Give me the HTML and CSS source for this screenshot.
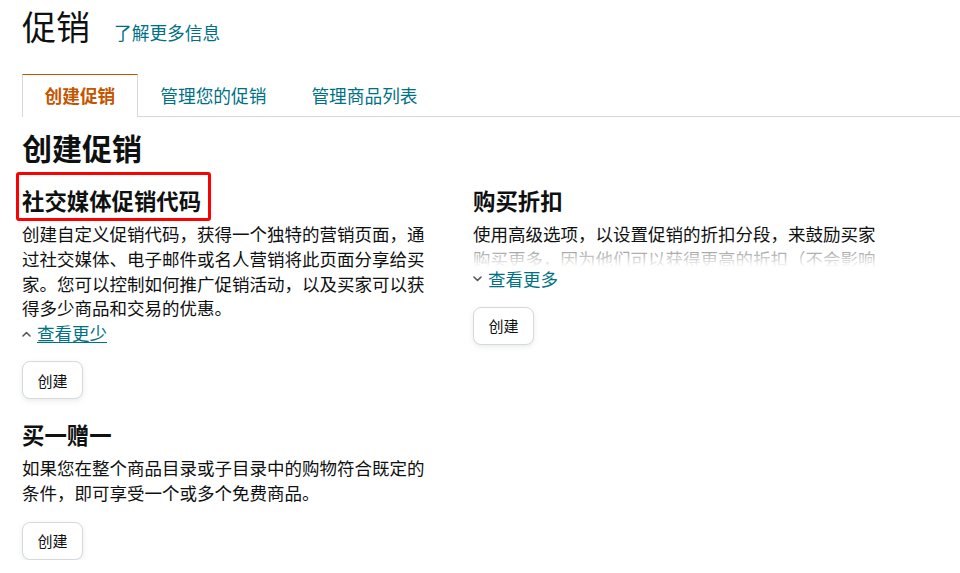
FILE: index.html
```html
<!DOCTYPE html>
<html lang="zh-CN">
<head>
<meta charset="utf-8">
<title>促销</title>
<link rel="stylesheet" href="styles.css">
</head>
<body>
<div class="page">
  <header class="header">
    <h1 class="title">促销</h1>
    <a class="learn" href="#">了解更多信息</a>
  </header>

  <nav class="tabs">
    <a class="tab active" href="#">创建促销</a>
    <a class="tab" href="#">管理您的促销</a>
    <a class="tab" href="#">管理商品列表</a>
  </nav>

  <h2 class="section-title">创建促销</h2>

  <div class="grid">
    <section class="promo promo-social">
      <h3 class="promo-title"><span class="marked">社交媒体促销代码</span></h3>
      <p class="promo-desc">创建自定义促销代码，获得一个独特的营销页面，通过社交媒体、电子邮件或名人营销将此页面分享给买家。您可以控制如何推广促销活动，以及买家可以获得多少商品和交易的优惠。</p>
      <a class="toggle underline" href="#">
        <svg class="chev" width="9" height="6" viewBox="0 0 9 6"><path d="M1 5 L4.5 1.5 L8 5" fill="none" stroke="#565959" stroke-width="1.6" stroke-linecap="round" stroke-linejoin="round"/></svg>
        <span>查看更少</span>
      </a>
      <button class="btn" type="button">创建</button>
    </section>

    <section class="promo promo-discount">
      <h3 class="promo-title">购买折扣</h3>
      <div class="collapsed">
        <p class="promo-desc">使用高级选项，以设置促销的折扣分段，来鼓励买家购买更多，因为他们可以获得更高的折扣（不会影响您的利润）。</p>
      </div>
      <a class="toggle" href="#">
        <svg class="chev" width="9" height="6" viewBox="0 0 9 6"><path d="M1 1 L4.5 4.5 L8 1" fill="none" stroke="#565959" stroke-width="1.6" stroke-linecap="round" stroke-linejoin="round"/></svg>
        <span>查看更多</span>
      </a>
      <button class="btn" type="button">创建</button>
    </section>

    <section class="promo promo-bogo">
      <h3 class="promo-title">买一赠一</h3>
      <p class="promo-desc">如果您在整个商品目录或子目录中的购物符合既定的条件，即可享受一个或多个免费商品。</p>
      <button class="btn" type="button">创建</button>
    </section>
  </div>
</div>
</body>
</html>
```

FILE: styles.css
```css
* { box-sizing: border-box; }

html, body {
  margin: 0;
  padding: 0;
  background: #fff;
}

body {
  font-family: "Noto Sans CJK SC", "Noto Sans", sans-serif;
  color: #0f1111;
}

a { text-decoration: none; }

.page {
  padding: 4px 0 0 22px;
}

.header {
  display: flex;
  align-items: baseline;
  gap: 24px;
}

.title {
  margin: 0;
  font-size: 34px;
  line-height: 44px;
  font-weight: 400;
}

.learn {
  font-size: 17.7px;
  line-height: 24px;
  color: #007185;
}

.tabs {
  display: flex;
  align-items: flex-start;
  margin-top: 26px;
  border-bottom: 1px solid #d5d9d9;
}

.tab {
  display: block;
  height: 42px;
  padding: 0 21.5px;
  border: 1px solid transparent;
  border-bottom: 0;
  font-size: 17.7px;
  line-height: 40px;
  color: #007185;
  background: #fff;
}

.tab.active {
  height: 43px;
  margin-bottom: -1px;
  border-color: #d5d9d9;
  border-top-color: #c45500;
  color: #c45500;
  font-weight: 700;
}

.section-title {
  margin: 11px 0 19px;
  font-size: 30px;
  line-height: 39px;
  font-weight: 700;
}

.grid {
  display: grid;
  grid-template-columns: 451px 451px;
  row-gap: 21px;
  align-items: start;
}

.promo {
  display: flex;
  flex-direction: column;
  align-items: flex-start;
  padding-right: 40px;
}

.promo-social { grid-column: 1; grid-row: 1; }
.promo-discount { grid-column: 2; grid-row: 1; }
.promo-bogo { grid-column: 1; grid-row: 2; }

.promo-title {
  margin: 0 0 8px;
  font-size: 22.4px;
  line-height: 28px;
  font-weight: 700;
}

.marked {
  position: relative;
  display: inline-block;
}

.marked::after {
  content: "";
  position: absolute;
  top: -14px;
  left: -6px;
  right: -10px;
  bottom: -7px;
  border: 3px solid #ff0000;
  border-radius: 3px;
}

.promo-desc {
  margin: 0;
  font-size: 17.5px;
  line-height: 24.8px;
}

.collapsed {
  position: relative;
  height: 44.5px;
  overflow: hidden;
}

.collapsed::after {
  content: "";
  position: absolute;
  left: 0;
  right: 0;
  top: 24.8px;
  bottom: 0;
  background: linear-gradient(to bottom, rgba(255,255,255,0.5), #fff);
}

.toggle {
  display: flex;
  align-items: center;
  gap: 6px;
  font-size: 17.5px;
  line-height: 24.8px;
  color: #007185;
}

.toggle.underline span {
  text-decoration: underline;
  text-underline-offset: 2px;
}

.chev {
  display: block;
  flex: none;
}

.btn {
  margin-top: 15.5px;
  height: 38px;
  padding: 0 14.5px;
  border: 1px solid #d5d9d9;
  border-radius: 8px;
  background: #fff;
  box-shadow: 0 2px 5px 0 rgba(213, 217, 217, 0.5);
  font-family: "Noto Sans CJK SC", "Noto Sans", sans-serif;
  font-size: 15px;
  color: #0f1111;
  cursor: pointer;
}
```
